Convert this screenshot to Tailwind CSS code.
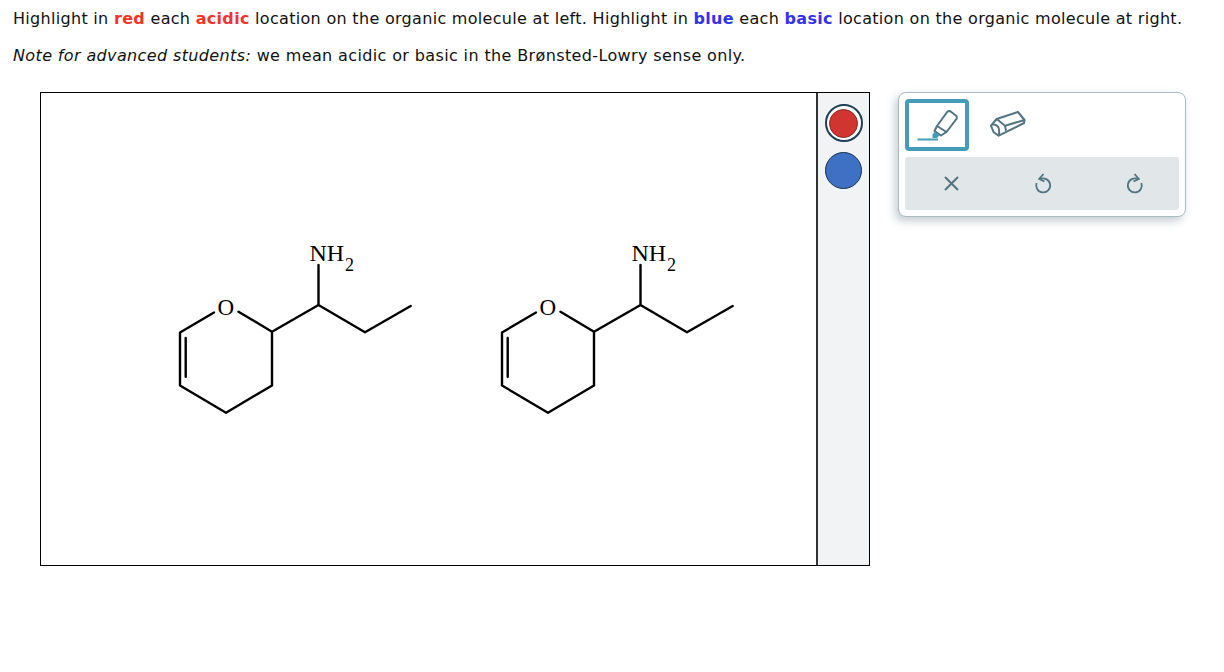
<!DOCTYPE html>
<html>
<head>
<meta charset="utf-8">
<script src="https://cdn.jsdelivr.net/npm/@tailwindcss/browser@4"></script>
</head>
<body class="bg-white h-[672px] w-[1224px] overflow-hidden font-['DejaVu_Sans',sans-serif] text-[16px] text-[#111]">
<div class="pt-[8px] pl-[13px] flex flex-col gap-[15px] leading-[22px] whitespace-nowrap">
  <p class="tracking-[0.305px]">Highlight in <b class="text-[#f0352b]">red</b> each <b class="text-[#f0352b]">acidic</b> location on the organic molecule at left. Highlight in <b class="text-[#3333ee]">blue</b> each <b class="text-[#3333ee]">basic</b> location on the organic molecule at right.</p>
  <p class="tracking-[0.37px]"><i>Note for advanced students:</i> we mean acidic or basic in the Brønsted-Lowry sense only.</p>
</div>
<div class="flex items-start mt-[25px] ml-[40px]">
  <div class="flex w-[830px] h-[474px] border border-black">
    <svg class="w-[775px] h-[472px] shrink-0" viewBox="41 93 775 472" fill="none" stroke="#000" stroke-width="2.4" stroke-linecap="round" stroke-linejoin="round">
      <g>
        <path d="M214 312.5 180 332.5V385.5L226 412.7 272 385.5V331.7L238.5 311.7M185.7 338V376.7M272 331.7 318.5 305 365 332.3 410.7 306M318.5 305V265"/>
        <text x="217.5" y="314.5" font-family="Liberation Serif" font-size="23" fill="#000" stroke="none">O</text>
        <text x="309.5" y="260.5" font-family="Liberation Serif" font-size="24" fill="#000" stroke="none">NH</text>
        <text x="345" y="271" font-family="Liberation Serif" font-size="18" fill="#000" stroke="none">2</text>
      </g>
      <g>
        <path d="M536 312.5 502 332.5V385.5L548 412.7 594 385.5V331.7L560.5 311.7M507.7 338V376.7M594 331.7 640.5 305 687 332.3 732.7 306M640.5 305V265"/>
        <text x="539.5" y="314.5" font-family="Liberation Serif" font-size="23" fill="#000" stroke="none">O</text>
        <text x="631.5" y="260.5" font-family="Liberation Serif" font-size="24" fill="#000" stroke="none">NH</text>
        <text x="667" y="271" font-family="Liberation Serif" font-size="18" fill="#000" stroke="none">2</text>
      </g>
    </svg>
    <div class="flex-1 bg-[#f1f3f4] border-l-2 border-[#333] flex flex-col items-center pt-[11px] gap-[10px]">
      <div class="w-[38px] h-[38px] rounded-full border-2 border-[#1d3f55] bg-white flex items-center justify-center">
        <div class="w-[29px] h-[29px] rounded-full bg-[#d1352f] border border-[#8a2a26]"></div>
      </div>
      <div class="w-[37px] h-[37px] rounded-full bg-[#3e70c4] border border-[#16344f]"></div>
    </div>
  </div>
  <div class="ml-[28px] w-[288px] h-[125px] rounded-[8px] border border-[#a9bcc2] bg-white shadow-[-3px_4px_8px_rgba(90,110,120,0.35)] p-[6px] flex flex-col gap-[6px]">
    <div class="flex items-center gap-[19px]">
      <div class="w-[64px] h-[52px] rounded-[4px] border-[4px] border-[#439db9] flex items-center justify-center">
        <svg width="52" height="42" viewBox="0 0 52 42" fill="none" class="shrink-0">
          <path d="M26 22 36.5 7.5 39 7l6.5 5 .3 2.5L35.5 28 26 22z" stroke="#527380" stroke-width="2" stroke-linejoin="round"/>
          <path d="M26 22 23.5 27 30 31.5 35.5 28" stroke="#527380" stroke-width="2" stroke-linejoin="round"/>
          <path d="M21.5 30.5l2.3-3 5 3.5-2.8 3-4.5 0z" fill="#439db9"/>
          <path d="M6.5 35.5H27" stroke="#439db9" stroke-width="2"/>
        </svg>
      </div>
      <svg width="40" height="30" viewBox="0 0 40 30" fill="none" stroke="#527380" stroke-width="2" stroke-linejoin="round" class="mt-[-3px]">
        <path d="M3 16.7 8.7 10 30 3 36.5 11 36 14 10.7 26.7 5.5 23z"/>
        <path d="M8.7 10 17 16.7 36.5 11M17 16.7 18 21.7M4.5 15.5C9 15 12.5 18 10.7 26.7"/>
      </svg>
    </div>
    <div class="grid grid-cols-3 justify-items-center items-center h-[53px] rounded-[3px] bg-[#e1e6e8] pl-[1px]">
      <svg width="17" height="17" viewBox="0 0 17 17" fill="none" stroke="#527380" stroke-width="2"><path d="M2 2 15 15M15 2 2 15"/></svg>
      <svg width="18" height="22" viewBox="0 0 18 22" fill="none" stroke="#527380" stroke-width="1.8"><path d="M6 6.2A7 7 0 1 1 2.6 10"/><path d="M9.5 1 5.2 6 10.5 8.5"/></svg>
      <svg width="18" height="22" viewBox="0 0 18 22" fill="none" stroke="#527380" stroke-width="1.8" class="ml-[3px]"><path d="M12 6.2A7 7 0 1 0 15.4 10"/><path d="M8.5 1 12.8 6 7.5 8.5"/></svg>
    </div>
  </div>
</div>
</body>
</html>
